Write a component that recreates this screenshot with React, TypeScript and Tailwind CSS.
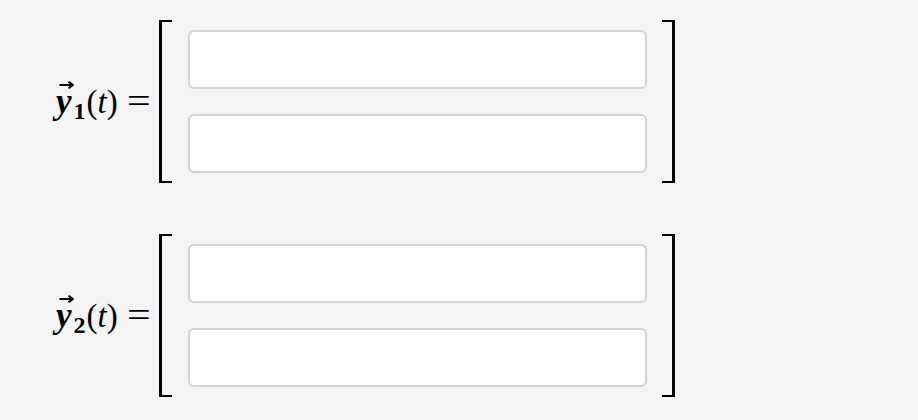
import React from "react"

function VecLabel({sub}: {sub: string}) {
    return (
        <div className="flex items-baseline whitespace-nowrap font-['Liberation_Serif',serif] text-[35px] leading-none text-black">
            <span className="relative inline-block font-bold italic">
                y
                <svg className="absolute left-[3px] top-[-3px]" width="15" height="8" viewBox="0 0 15 8">
                    <path d="M0.5 4 H13.5" stroke="black" strokeWidth="2"/>
                    <path d="M9.5 0.8 L14 4 L9.5 7.2" stroke="black" strokeWidth="2" fill="none"/>
                </svg>
            </span>
            <span className="relative top-[6px] ml-[2px] text-[24px] font-bold">{sub}</span>
            <span className="ml-[1px] text-[33px]">(</span>
            <span className="text-[33px] italic">t</span>
            <span className="text-[33px]">)</span>
            <span className="ml-[9px] inline-block origin-left scale-x-[1.2]">=</span>
        </div>
    )
}

function VectorRow({sub}: {sub: string}) {
    return (
        <div className="flex items-center">
            <div className="w-[159px] shrink-0 pl-[56px]">
                <VecLabel sub={sub}/>
            </div>
            <div className="flex shrink-0 items-stretch">
                <div className="w-[13px] border-y-2 border-l-[3px] border-black"/>
                <div className="flex flex-col gap-[25px] py-[10px] pl-[16px] pr-[15px]">
                    <input type="text"
                           className="h-[59px] w-[459px] rounded-[6px] border-2 border-[#d3d3d3] bg-white outline-none"/>
                    <input type="text"
                           className="h-[59px] w-[459px] rounded-[6px] border-2 border-[#d3d3d3] bg-white outline-none"/>
                </div>
                <div className="w-[13px] border-y-2 border-r-[3px] border-black"/>
            </div>
        </div>
    )
}

export default function App() {
    return (
        <div className="flex h-[420px] w-[918px] flex-col gap-[51px] bg-[#f4f4f4] pt-[20px]">
            <VectorRow sub="1"/>
            <VectorRow sub="2"/>
        </div>
    )
}
